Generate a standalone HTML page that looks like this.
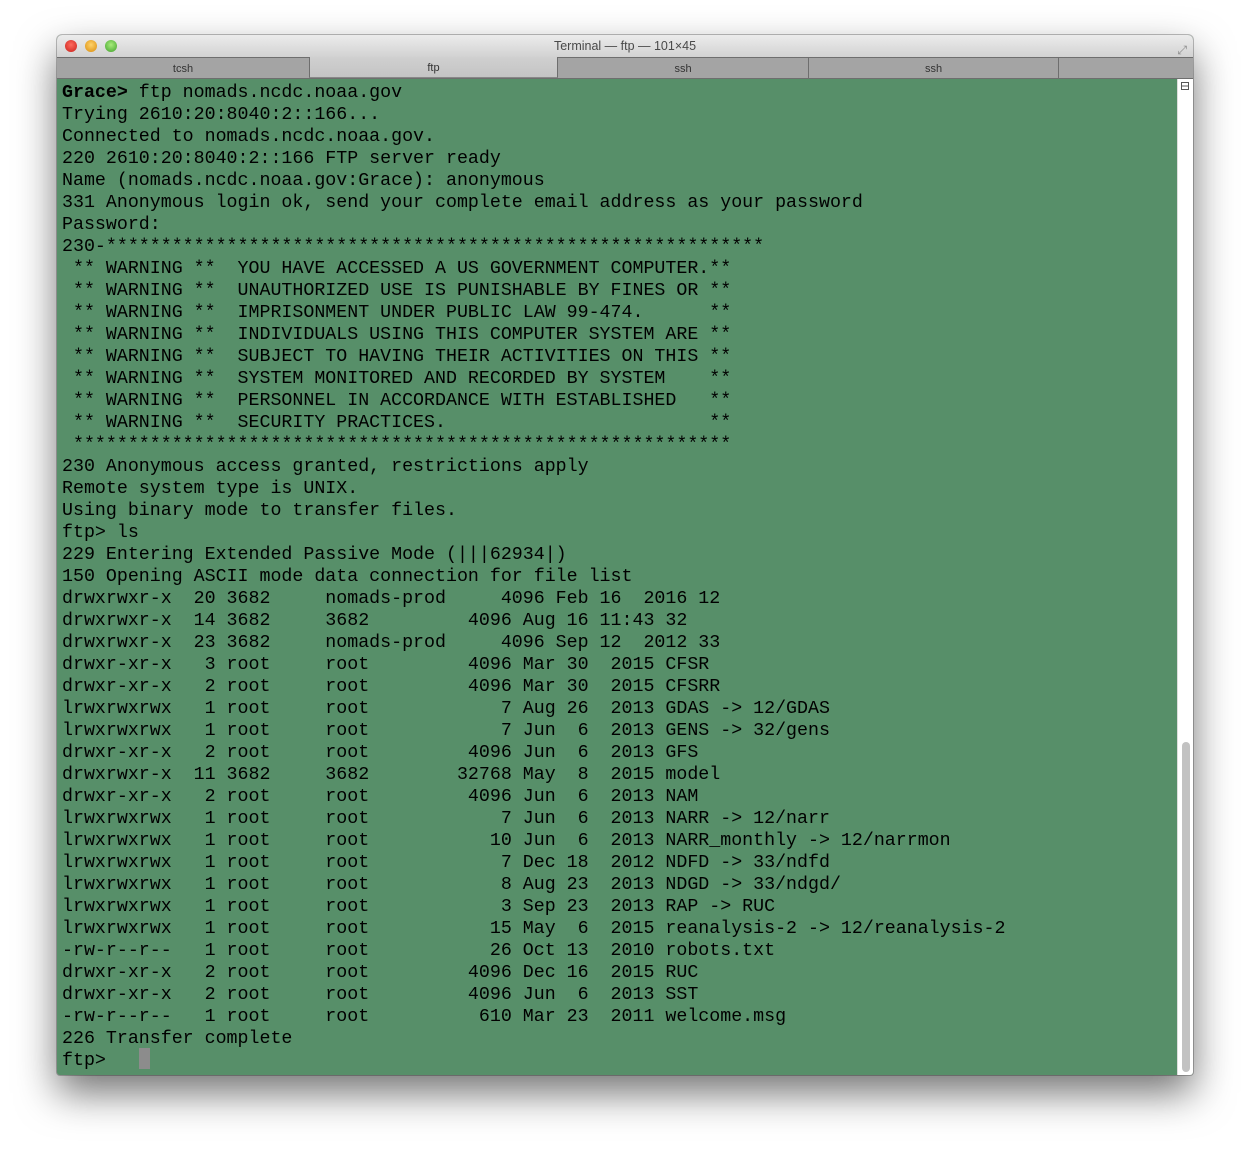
<!DOCTYPE html>
<html><head><meta charset="utf-8"><style>
html,body{margin:0;padding:0;background:#fff;width:1250px;height:1154px;overflow:hidden}
.win{position:absolute;left:57px;top:35px;width:1136px;height:1040px;background:#578f69;border-radius:5px 5px 3px 3px;box-shadow:0 18px 40px rgba(0,0,0,.55),0 0 0 1px rgba(0,0,0,.25);overflow:hidden}
.title{position:absolute;left:0;top:0;width:100%;height:22px;background:linear-gradient(#ececec,#d2d2d2);font:12.5px "Liberation Sans",sans-serif;color:#4a4a4a;text-align:center;line-height:22px}
.dot{position:absolute;top:5px;width:12px;height:12px;border-radius:50%}
.tabs{position:absolute;left:0;top:22px;width:100%;height:22px;background:#a4a4a4;border-top:1px solid #6e6e6e;border-bottom:1px solid #6e6e6e;box-sizing:border-box}
.tab{position:absolute;top:0;height:20px;font:11px "Liberation Sans",sans-serif;color:#333;text-align:center;line-height:22px;border-right:1px solid #6e6e6e;box-sizing:border-box}
.tab.act{background:linear-gradient(#d0d0d0,#c4c4c4);border-left:1px solid #6e6e6e;height:21px;top:-1px;border-bottom:1px solid #888}
pre{position:absolute;left:5px;top:47px;margin:0;font:18.3px/22px "Liberation Mono",monospace;color:#000;white-space:pre}
.sb{position:absolute;right:0;top:44px;width:15px;height:996px;background:#fff;border-left:1px solid #ddd}
.thumb{position:absolute;left:4px;top:663px;width:8px;height:330px;background:#c2c2c2;border-radius:4px}
.cur{position:absolute;left:82px;top:1013px;width:11px;height:21px;background:#8c8c8c}
</style></head><body>
<div class="win">
<div class="title">Terminal — ftp — 101×45
<div class="dot" style="left:8px;background:radial-gradient(circle at 50% 40%,#ff6b5e,#c8201a);"></div>
<div class="dot" style="left:28px;background:radial-gradient(circle at 50% 40%,#ffd36a,#d98b0c);"></div>
<div class="dot" style="left:48px;background:radial-gradient(circle at 50% 40%,#a8ec7c,#3fa02a);"></div>
<div style="position:absolute;right:6px;top:4px;font-size:12px;color:#888">⤢</div>
</div>
<div class="tabs">
<div class="tab" style="left:0;width:253px">tcsh</div>
<div class="tab act" style="left:252px;width:249px">ftp</div>
<div class="tab" style="left:501px;width:251px">ssh</div>
<div class="tab" style="left:752px;width:250px">ssh</div>
</div>
<pre><b>Grace&gt;</b> ftp nomads.ncdc.noaa.gov
Trying 2610:20:8040:2::166...
Connected to nomads.ncdc.noaa.gov.
220 2610:20:8040:2::166 FTP server ready
Name (nomads.ncdc.noaa.gov:Grace): anonymous
331 Anonymous login ok, send your complete email address as your password
Password:
230-************************************************************
 ** WARNING **  YOU HAVE ACCESSED A US GOVERNMENT COMPUTER.**
 ** WARNING **  UNAUTHORIZED USE IS PUNISHABLE BY FINES OR **
 ** WARNING **  IMPRISONMENT UNDER PUBLIC LAW 99-474.      **
 ** WARNING **  INDIVIDUALS USING THIS COMPUTER SYSTEM ARE **
 ** WARNING **  SUBJECT TO HAVING THEIR ACTIVITIES ON THIS **
 ** WARNING **  SYSTEM MONITORED AND RECORDED BY SYSTEM    **
 ** WARNING **  PERSONNEL IN ACCORDANCE WITH ESTABLISHED   **
 ** WARNING **  SECURITY PRACTICES.                        **
 ************************************************************
230 Anonymous access granted, restrictions apply
Remote system type is UNIX.
Using binary mode to transfer files.
ftp&gt; ls
229 Entering Extended Passive Mode (|||62934|)
150 Opening ASCII mode data connection for file list
drwxrwxr-x  20 3682     nomads-prod     4096 Feb 16  2016 12
drwxrwxr-x  14 3682     3682         4096 Aug 16 11:43 32
drwxrwxr-x  23 3682     nomads-prod     4096 Sep 12  2012 33
drwxr-xr-x   3 root     root         4096 Mar 30  2015 CFSR
drwxr-xr-x   2 root     root         4096 Mar 30  2015 CFSRR
lrwxrwxrwx   1 root     root            7 Aug 26  2013 GDAS -&gt; 12/GDAS
lrwxrwxrwx   1 root     root            7 Jun  6  2013 GENS -&gt; 32/gens
drwxr-xr-x   2 root     root         4096 Jun  6  2013 GFS
drwxrwxr-x  11 3682     3682        32768 May  8  2015 model
drwxr-xr-x   2 root     root         4096 Jun  6  2013 NAM
lrwxrwxrwx   1 root     root            7 Jun  6  2013 NARR -&gt; 12/narr
lrwxrwxrwx   1 root     root           10 Jun  6  2013 NARR_monthly -&gt; 12/narrmon
lrwxrwxrwx   1 root     root            7 Dec 18  2012 NDFD -&gt; 33/ndfd
lrwxrwxrwx   1 root     root            8 Aug 23  2013 NDGD -&gt; 33/ndgd/
lrwxrwxrwx   1 root     root            3 Sep 23  2013 RAP -&gt; RUC
lrwxrwxrwx   1 root     root           15 May  6  2015 reanalysis-2 -&gt; 12/reanalysis-2
-rw-r--r--   1 root     root           26 Oct 13  2010 robots.txt
drwxr-xr-x   2 root     root         4096 Dec 16  2015 RUC
drwxr-xr-x   2 root     root         4096 Jun  6  2013 SST
-rw-r--r--   1 root     root          610 Mar 23  2011 welcome.msg
226 Transfer complete
ftp&gt;</pre>
<div class="cur"></div>
<div class="sb"><div style="position:absolute;left:3px;top:3px;width:8px;height:8px;border:1px solid #555;box-sizing:border-box;background:linear-gradient(#fff 40%,#555 40%,#555 60%,#fff 60%)"></div><div class="thumb"></div></div>
</div>
</body></html>
